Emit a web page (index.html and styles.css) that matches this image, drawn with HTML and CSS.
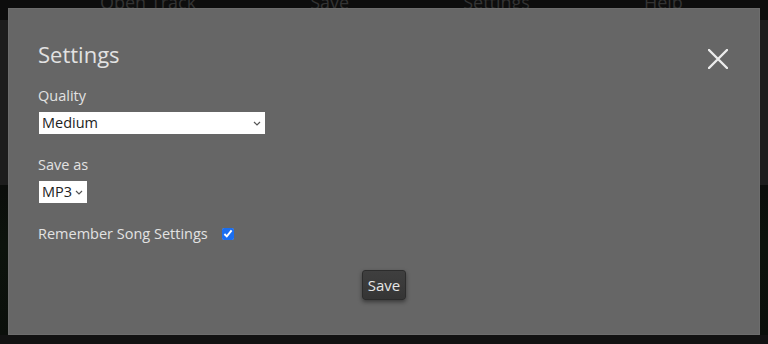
FILE: index.html
```html
<!DOCTYPE html>
<html>
<head>
<meta charset="utf-8">
<link rel="stylesheet" href="styles.css">
</head>
<body>
<div class="app">
  <nav class="topnav">
    <span class="nav-item">Open Track</span>
    <span class="nav-item">Save</span>
    <span class="nav-item">Settings</span>
    <span class="nav-item">Help</span>
  </nav>
  <div class="toolbar"></div>
  <div class="wave"></div>
  <div class="footer"></div>
</div>

<div class="modal">
  <button class="close" aria-label="Close">
    <svg width="20" height="20" viewBox="0 0 20 20"><path d="M1 1 L19 19 M19 1 L1 19" stroke="#ececec" stroke-width="2.4" stroke-linecap="round" fill="none"/></svg>
  </button>
  <h2 class="title">Settings</h2>

  <div class="group">
    <div class="label">Quality</div>
    <div class="select-wrap wide">
      <select class="select"><option>Medium</option><option>Low</option><option>High</option></select>
      <svg class="chev" width="8" height="5" viewBox="0 0 8 5"><path d="M1 1 L4 4 L7 1" stroke="#555" stroke-width="1.2" fill="none"/></svg>
    </div>
  </div>

  <div class="group">
    <div class="label">Save as</div>
    <div class="select-wrap narrow">
      <select class="select"><option>MP3</option><option>WAV</option></select>
      <svg class="chev" width="8" height="5" viewBox="0 0 8 5"><path d="M1 1 L4 4 L7 1" stroke="#555" stroke-width="1.2" fill="none"/></svg>
    </div>
  </div>

  <div class="group row">
    <span class="label">Remember Song Settings</span>
    <input type="checkbox" class="check" checked>
  </div>

  <div class="actions">
    <button class="save-btn">Save</button>
  </div>
</div>
</body>
</html>
```

FILE: styles.css
```css
html, body {
  margin: 0;
  padding: 0;
}
body {
  width: 768px;
  height: 344px;
  overflow: hidden;
  background: #111;
  font-family: "Open Sans", "Noto Sans", sans-serif;
}
.app {
  display: flex;
  flex-direction: column;
  height: 344px;
}
.topnav {
  height: 20px;
  background: #0d0d0d;
  display: flex;
  gap: 114px;
  padding-left: 100px;
  overflow: hidden;
}
.nav-item {
  font-size: 18px;
  line-height: 18px;
  margin-top: -7px;
  color: #333;
  white-space: nowrap;
}
.toolbar {
  height: 165px;
  background: #1d1d1d;
}
.wave {
  flex: 1;
  background: linear-gradient(180deg, #0b0d0b 0%, #0c130c 40%, #0b0f0b 100%);
}
.footer {
  height: 9px;
  background: #121212;
}

.modal {
  position: absolute;
  left: 8px;
  top: 8px;
  width: 752px;
  height: 327px;
  box-sizing: border-box;
  background: #666;
  border: 1px solid #6d6d6d;
  padding: 29px 29px 0;
  color: #e2e2e2;
}
.close {
  position: absolute;
  right: 31px;
  top: 40px;
  width: 20px;
  height: 20px;
  padding: 0;
  border: 0;
  background: transparent;
  display: block;
}
.close svg { display: block; }
.title {
  margin: 0;
  font-size: 22px;
  line-height: 33px;
  font-weight: 400;
}
.group {
  margin-top: 15px;
}
.group + .group {
  margin-top: 21px;
}
.label {
  font-size: 14.5px;
  line-height: 20px;
  color: #e2e2e2;
}
.select-wrap {
  position: relative;
  margin-top: 6px;
  height: 22px;
  margin-left: 1px;
}
.select-wrap.wide { width: 226px; }
.select-wrap.narrow { width: 48px; }
.select {
  appearance: none;
  -webkit-appearance: none;
  display: block;
  width: 100%;
  height: 22px;
  box-sizing: border-box;
  border: 0;
  border-radius: 0;
  background: #fff;
  font-family: "Open Sans", "Noto Sans", sans-serif;
  font-size: 14.5px;
  line-height: 20px;
  color: #222;
  padding: 0 0 0 3px;
  margin: 0;
}
.chev {
  position: absolute;
  right: 4px;
  top: 9px;
}
.row {
  display: flex;
  align-items: center;
}
.check {
  margin: 0 0 0 14px;
  width: 12px;
  height: 12px;
  accent-color: #1a6ef0;
}
.actions {
  display: flex;
  justify-content: center;
  margin-top: 26px;
}
.save-btn {
  width: 44px;
  height: 30px;
  padding: 0;
  border: 1px solid #2c2c2c;
  border-radius: 3px;
  background: linear-gradient(180deg, #3f3f3f, #353535);
  color: #e6e6e6;
  font-family: "Open Sans", "Noto Sans", sans-serif;
  font-size: 15px;
  box-shadow: 0 2px 4px rgba(0,0,0,0.45);
}
```
